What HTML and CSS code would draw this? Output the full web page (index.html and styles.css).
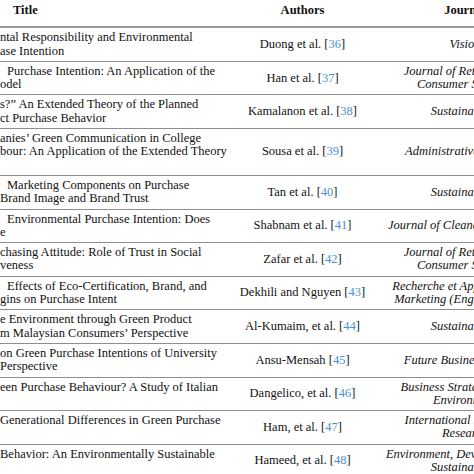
FILE: index.html
```html
<!DOCTYPE html>
<html lang="en">
<head>
<meta charset="utf-8">
<title>Green purchase studies</title>
<link rel="stylesheet" href="styles.css">
</head>
<body>
<div class="frame">
  <table class="studies">
    <colgroup>
      <col class="c-title">
      <col class="c-authors">
      <col class="c-journal">
    </colgroup>
    <thead>
      <tr>
        <th class="h-title">Title</th>
        <th>Authors</th>
        <th>Journal</th>
      </tr>
    </thead>
    <tbody>
      <tr>
        <td class="t">ntal Responsibility and Environmental<br>ase Intention</td>
        <td class="a">Duong et al. [<span class="ref">36</span>]</td>
        <td class="j">Vision</td>
      </tr>
      <tr>
        <td class="t"><span class="lead"></span>Purchase Intention: An Application of the<br>odel</td>
        <td class="a">Han et al. [<span class="ref">37</span>]</td>
        <td class="j">Journal of Retailing and<br>Consumer Services</td>
      </tr>
      <tr>
        <td class="t">s?” An Extended Theory of the Planned<br>ct Purchase Behavior</td>
        <td class="a">Kamalanon et al. [<span class="ref">38</span>]</td>
        <td class="j">Sustainability</td>
      </tr>
      <tr>
        <td class="t">anies’ Green Communication in College<br>bour: An Application of the Extended Theory<br>&nbsp;</td>
        <td class="a">Sousa et al. [<span class="ref">39</span>]</td>
        <td class="j">Administrative Sciences</td>
      </tr>
      <tr>
        <td class="t"><span class="lead"></span>Marketing Components on Purchase<br>Brand Image and Brand Trust</td>
        <td class="a">Tan et al. [<span class="ref">40</span>]</td>
        <td class="j">Sustainability</td>
      </tr>
      <tr>
        <td class="t"><span class="lead"></span>Environmental Purchase Intention: Does<br>e</td>
        <td class="a">Shabnam et al. [<span class="ref">41</span>]</td>
        <td class="j">Journal of Cleaner Production</td>
      </tr>
      <tr>
        <td class="t">chasing Attitude: Role of Trust in Social<br>veness</td>
        <td class="a">Zafar et al. [<span class="ref">42</span>]</td>
        <td class="j">Journal of Retailing and<br>Consumer Services</td>
      </tr>
      <tr>
        <td class="t"><span class="lead"></span>Effects of Eco-Certification, Brand, and<br>gins on Purchase Intent</td>
        <td class="a">Dekhili and Nguyen [<span class="ref">43</span>]</td>
        <td class="j">Recherche et Applications en<br>Marketing (English Edition)</td>
      </tr>
      <tr>
        <td class="t">e Environment through Green Product<br>m Malaysian Consumers’ Perspective</td>
        <td class="a">Al-Kumaim, et al. [<span class="ref">44</span>]</td>
        <td class="j">Sustainability</td>
      </tr>
      <tr>
        <td class="t">on Green Purchase Intentions of University<br>Perspective</td>
        <td class="a">Ansu-Mensah [<span class="ref">45</span>]</td>
        <td class="j">Future Business Journal</td>
      </tr>
      <tr>
        <td class="t">een Purchase Behaviour? A Study of Italian<br>&nbsp;</td>
        <td class="a">Dangelico, et al. [<span class="ref">46</span>]</td>
        <td class="j">Business Strategy and the<br>Environment</td>
      </tr>
      <tr>
        <td class="t">Generational Differences in Green Purchase<br>&nbsp;</td>
        <td class="a">Ham, et al. [<span class="ref">47</span>]</td>
        <td class="j">International Journal of<br>Research</td>
      </tr>
      <tr>
        <td class="t">Behavior: An Environmentally Sustainable<br>&nbsp;</td>
        <td class="a">Hameed, et al. [<span class="ref">48</span>]</td>
        <td class="j">Environment, Development and<br>Sustainability</td>
      </tr>
    </tbody>
  </table>
</div>
</body>
</html>
```
FILE: styles.css
```css
html, body {
  margin: 0;
  padding: 0;
  background: #ffffff;
}

.frame {
  width: 474px;
  height: 474px;
  overflow: hidden;
  background: #ffffff;
}

.studies {
  table-layout: fixed;
  width: 553px;
  border-collapse: collapse;
  font-family: "Liberation Serif", "Times New Roman", serif;
  font-size: 12.5px;
  line-height: 13.3px;
  color: #111111;
}

.c-title { width: 228px; }
.c-authors { width: 149px; }
.c-journal { width: 176px; }

.studies th {
  font-weight: bold;
  text-align: center;
  padding: 4px 0 9px;
  border-bottom: 2px solid #9a9a9a;
  white-space: nowrap;
}

.studies th.h-title {
  text-align: left;
  padding-left: 13px;
}

.studies td {
  padding: 3px 0;
  border-bottom: 1px solid #8e8e8e;
  vertical-align: middle;
  white-space: nowrap;
}

.studies td.t {
  text-align: left;
  vertical-align: top;
}

.studies td.a {
  text-align: center;
}

.studies td.j {
  text-align: center;
  font-style: italic;
}

.lead {
  display: inline-block;
  width: 7px;
}

.ref {
  color: #4b8fd6;
}
```
